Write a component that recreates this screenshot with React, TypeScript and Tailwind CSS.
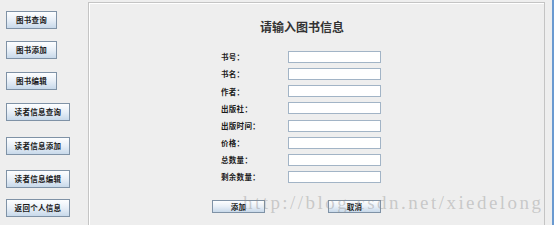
import React from "react";

type NavItem = { label: string; wide: boolean; gap: string };

const navItems: NavItem[] = [
  { label: "图书查询", wide: false, gap: "mt-[11px]" },
  { label: "图书添加", wide: false, gap: "mt-[12px]" },
  { label: "图书编辑", wide: false, gap: "mt-[13px]" },
  { label: "读者信息查询", wide: true, gap: "mt-[13px]" },
  { label: "读者信息添加", wide: true, gap: "mt-[16px]" },
  { label: "读者信息编辑", wide: true, gap: "mt-[15px]" },
  { label: "返回个人信息", wide: true, gap: "mt-[11px]" },
];

const fields = ["书号：", "书名：", "作者：", "出版社：", "出版时间：", "价格：", "总数量：", "剩余数量："];

const font = "font-['Noto_Sans_CJK_SC','Liberation_Sans',sans-serif]";

function SwingButton({ label, className }: { label: string; className: string }) {
  return (
    <button
      className={`flex items-center justify-center border border-[#7f92a6] bg-linear-to-b from-[#fdfeff] via-[#e8eff7] to-[#c8d9ea] text-[7.5px] font-bold leading-none tracking-[0.3px] text-[#1a1a1a] ${className}`}
    >
      {label}
    </button>
  );
}

export default function App() {
  return (
    <div className={`relative flex h-[225px] w-[554px] overflow-hidden bg-[#eeeeee] ${font}`}>
      {/* left nav */}
      <div className="flex w-[88px] shrink-0 flex-col pl-[6px]">
        {navItems.map((item) => (
          <SwingButton
            key={item.label}
            label={item.label}
            className={`${item.gap} h-[18px] ${item.wide ? "w-[64px]" : "w-[51px]"}`}
          />
        ))}
      </div>

      {/* form panel */}
      <div className="mt-[2px] h-[240px] w-[457px] shrink-0 border border-[#c4c4c4] shadow-[inset_1px_1px_0_#ffffff]">
        <div className="ml-[171px] mt-[16px] text-[12px] font-bold leading-[16px] text-[#333]">请输入图书信息</div>

        <div className="ml-[132px] mt-[16px] flex flex-col gap-[5.15px]">
          {fields.map((f) => (
            <div key={f} className="flex h-[12px] items-center">
              <div className="w-[67px] text-[7.5px] font-bold leading-none tracking-[0.3px] text-[#1a1a1a]">{f}</div>
              <div className="h-[12px] w-[93px] border border-[#a2b4c6] bg-white" />
            </div>
          ))}
        </div>

        <div className="ml-[123px] mt-[17px] flex gap-[63px]">
          <SwingButton label="添加" className="h-[13px] w-[53px]" />
          <SwingButton label="取消" className="h-[13px] w-[53px]" />
        </div>
      </div>

      <div className="ml-auto w-[2px] bg-[#6a9ad0]" />

      {/* watermark */}
      <div className="pointer-events-none absolute left-[243px] top-[193px] font-['Liberation_Serif',serif] text-[19px] leading-none tracking-[2.45px] text-[rgba(140,140,140,0.4)]">
        http://blog.csdn.net/xiedelong
      </div>
    </div>
  );
}
